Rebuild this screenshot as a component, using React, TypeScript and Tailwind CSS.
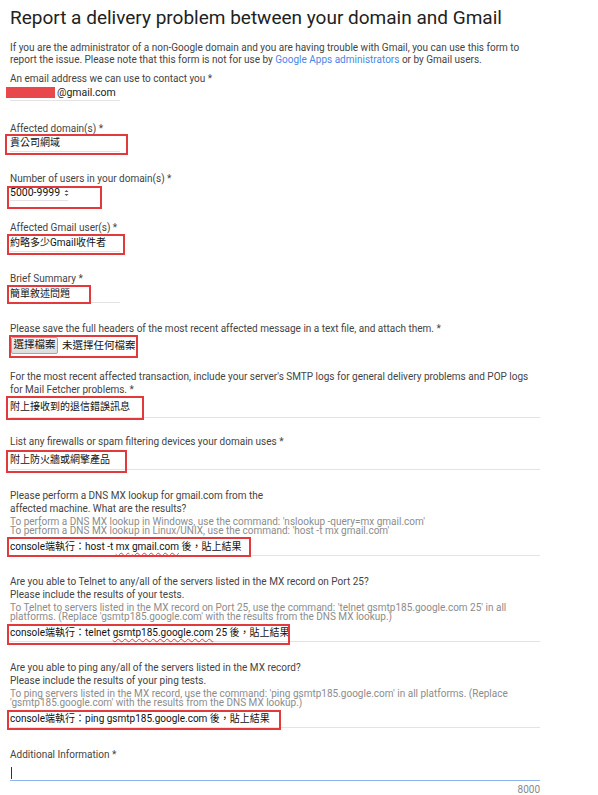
import React from "react";

const F = { fontFamily: 'Roboto, "Noto Sans CJK TC", sans-serif' };
const CJK = { fontFamily: 'Roboto, "Noto Sans CJK TC", sans-serif' };

function RedBox({ className }: { className: string }) {
  return <div className={`pointer-events-none absolute border-2 border-[#e2393d] ${className}`} />;
}

function Label({ children }: { children: React.ReactNode }) {
  return <div className="text-[10px] leading-[13px] text-[#444]">{children}</div>;
}

function Hint({ children }: { children: React.ReactNode }) {
  return <div className="text-[10px] leading-[8.5px] text-[#8c8c8c]">{children}</div>;
}

function Squig({ children }: { children: React.ReactNode }) {
  return <span className="underline decoration-wavy decoration-[#e2393d] decoration-[1px] underline-offset-2">{children}</span>;
}

const valueCls = "text-[10px] leading-[16px] text-[#111] whitespace-nowrap";

export default function App() {
  return (
    <div className="min-h-[795px] w-[598px] bg-white px-[10px]" style={F}>
      <h1 className="pt-[4px] text-[19px] leading-[28px] font-normal text-[#222]">
        Report a delivery problem between your domain and Gmail
      </h1>

      <div className="mt-[10px] text-[10px] leading-[11.5px] text-[#444]">
        If you are the administrator of a non-Google domain and you are having trouble with Gmail, you can use this form to
        <br />
        report the issue. Please note that this form is not for use by{" "}
        <span className="text-[#4a86e8]">Google Apps administrators</span> or by Gmail users.
      </div>

      {/* Email */}
      <div className="mt-[7px]">
        <Label>An email address we can use to contact you *</Label>
        <div className="relative flex h-[16px] w-[110px] items-center border-b border-[#e3e3e3]">
          <div className="ml-[-4px] h-[11px] w-[49px] bg-[#e8474b]" />
          <span className="ml-[2px] text-[10.5px] text-[#222]">@gmail.com</span>
        </div>
      </div>

      {/* Affected domain */}
      <div className="mt-[21px]">
        <Label>Affected domain(s) *</Label>
        <div className={`relative h-[17px] w-[110px] border-b border-[#e3e3e3] ${valueCls}`} style={CJK}>
          貴公司網域
          <RedBox className="left-[-5px] top-[-1px] h-[21px] w-[123px]" />
        </div>
      </div>

      {/* Number of users */}
      <div className="mt-[20px]">
        <Label>Number of users in your domain(s) *</Label>
        <div className="relative flex h-[16px] w-[58px] items-center border-b border-[#e3e3e3] text-[10.5px] text-[#111] whitespace-nowrap">
          <span>5000-9999</span>
          <svg width="5" height="8" viewBox="0 0 5 8" className="ml-[4px] shrink-0">
            <path d="M2.5 1 L4.5 3 L0.5 3 Z" fill="#555" />
            <path d="M2.5 7 L4.5 5 L0.5 5 Z" fill="#555" />
          </svg>
          <RedBox className="left-[-3px] top-[1px] h-[23px] w-[95px]" />
        </div>
      </div>

      {/* Gmail users */}
      <div className="mt-[20px]">
        <Label>Affected Gmail user(s) *</Label>
        <div className={`relative mt-[1px] h-[17px] w-[110px] border-b border-[#e3e3e3] ${valueCls}`} style={CJK}>
          約略多少Gmail收件者
          <RedBox className="left-[-3px] top-[-1px] h-[21px] w-[118px]" />
        </div>
      </div>

      {/* Brief Summary */}
      <div className="mt-[20px]">
        <Label>Brief Summary *</Label>
        <div className={`relative mt-[1px] h-[17px] w-[110px] border-b border-[#e3e3e3] ${valueCls}`} style={CJK}>
          簡單敘述問題
          <RedBox className="left-[-3px] top-[-1px] h-[19px] w-[84px]" />
        </div>
      </div>

      {/* File */}
      <div className="mt-[19px]">
        <Label>Please save the full headers of the most recent affected message in a text file, and attach them. *</Label>
        <div className="relative mt-[1px] flex h-[19px] items-center text-[10.5px] text-[#111]" style={CJK}>
          <span className="ml-[1px] flex h-[17px] w-[47px] items-center justify-center rounded-[2px] border border-[#a6a6a6] bg-gradient-to-b from-[#f4f4f4] to-[#dcdcdc] text-[10.5px] leading-none text-[#111]">
            選擇檔案
          </span>
          <span className="ml-[4px]">未選擇任何檔案</span>
          <RedBox className="left-[-1px] top-[-1px] h-[23px] w-[129px]" />
        </div>
      </div>

      {/* Transaction logs */}
      <div className="mt-[15px]">
        <Label>
          For the most recent affected transaction, include your server's SMTP logs for general delivery problems and POP logs
          <br />
          for Mail Fetcher problems. *
        </Label>
        <div className={`relative mt-[3px] h-[19px] w-[530px] border-b border-[#e3e3e3] ${valueCls}`} style={CJK}>
          附上接收到的退信錯誤訊息
          <RedBox className="left-[-4px] top-[-3px] h-[24px] w-[138px]" />
        </div>
      </div>

      {/* Firewalls */}
      <div className="mt-[17px]">
        <Label>List any firewalls or spam filtering devices your domain uses *</Label>
        <div className={`relative mt-[4px] h-[18px] w-[530px] border-b border-[#e3e3e3] ${valueCls}`} style={CJK}>
          附上防火牆或網擎產品
          <RedBox className="left-[-4px] top-[-2px] h-[23px] w-[121px]" />
        </div>
      </div>

      {/* DNS */}
      <div className="mt-[19px]">
        <Label>
          Please perform a DNS MX lookup for gmail.com from the
          <br />
          affected machine. What are the results?
        </Label>
        <div className="mt-[3px]">
          <Hint>
            To perform a DNS MX lookup in Windows, use the command: 'nslookup -query=mx gmail.com'
            <br />
            To perform a DNS MX lookup in Linux/UNIX, use the command: 'host -t mx gmail.com'
          </Hint>
        </div>
        <div className={`relative mt-[4px] h-[17px] w-[530px] border-b border-[#e3e3e3] ${valueCls}`} style={CJK}>
          console端執行：host -t <Squig>mx</Squig> <Squig>gmail.com</Squig> 後，貼上結果
          <RedBox className="left-[-3px] top-[-2px] h-[20px] w-[244px]" />
        </div>
      </div>

      {/* Telnet */}
      <div className="mt-[19px]">
        <Label>
          Are you able to Telnet to any/all of the servers listed in the MX record on Port 25?
          <br />
          Please include the results of your tests.
        </Label>
        <div className="mt-[3px]">
          <Hint>
            To Telnet to servers listed in the MX record on Port 25, use the command: 'telnet gsmtp185.google.com 25' in all
            <br />
            platforms. (Replace 'gsmtp185.google.com' with the results from the DNS MX lookup.)
          </Hint>
        </div>
        <div className={`relative mt-[4px] h-[17px] w-[530px] border-b border-[#e3e3e3] ${valueCls}`} style={CJK}>
          console端執行：telnet <Squig>gsmtp185.google.com</Squig> 25 後，貼上結果
          <RedBox className="left-[-3px] top-[-1px] h-[21px] w-[283px]" />
        </div>
      </div>

      {/* Ping */}
      <div className="mt-[19px]">
        <Label>
          Are you able to ping any/all of the servers listed in the MX record?
          <br />
          Please include the results of your ping tests.
        </Label>
        <div className="mt-[3px]">
          <Hint>
            To ping servers listed in the MX record, use the command: 'ping gsmtp185.google.com' in all platforms. (Replace
            <br />
            'gsmtp185.google.com' with the results from the DNS MX lookup.)
          </Hint>
        </div>
        <div className={`relative mt-[4px] h-[17px] w-[530px] border-b border-[#e3e3e3] ${valueCls}`} style={CJK}>
          console端執行：ping gsmtp185.google.com 後，貼上結果
          <RedBox className="left-[-3px] top-[-1px] h-[20px] w-[274px]" />
        </div>
      </div>

      {/* Additional */}
      <div className="mt-[20px]">
        <Label>Additional Information *</Label>
        <div className="mt-[4px] flex h-[16px] w-[530px] items-center border-b-[1.5px] border-[#8fb3ee]">
          <div className="ml-[1px] h-[12px] w-[1px] bg-[#333]" />
        </div>
        <div className="w-[530px] pt-[3px] text-right text-[10px] leading-[12px] text-[#888]">8000</div>
      </div>
    </div>
  );
}
